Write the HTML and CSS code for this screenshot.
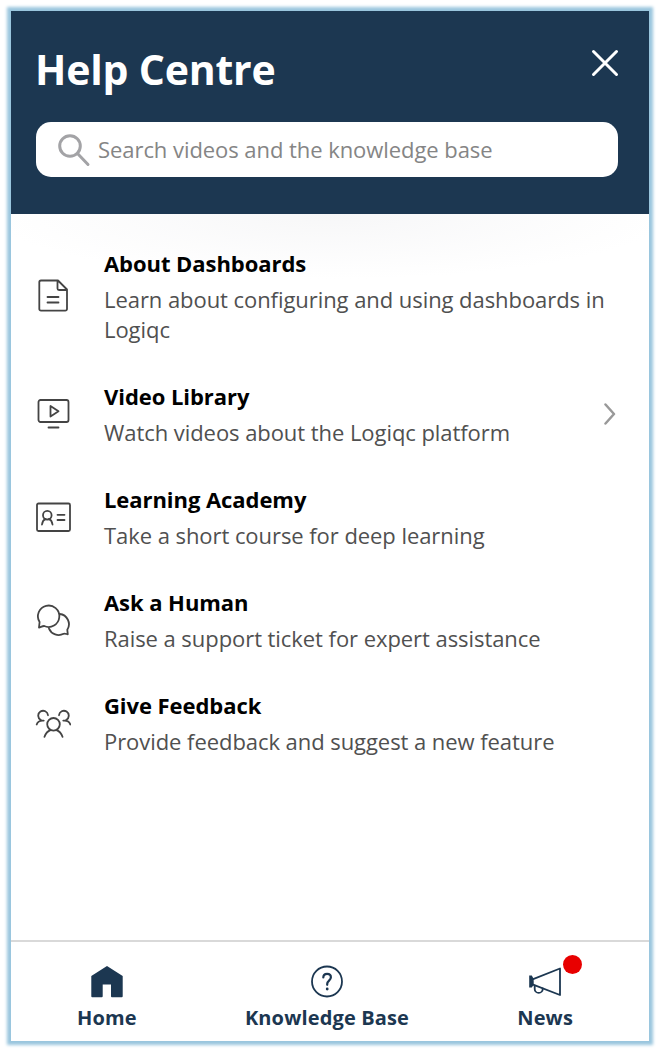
FILE: index.html
```html
<!DOCTYPE html>
<html lang="en">

<head>
    <meta charset="UTF-8">
    <meta name="viewport" content="width=device-width, initial-scale=1.0">
    <title>Help Centre</title>
    <link rel="stylesheet" href="styles.css">
</head>

<body>
    <div class="widget">
        <header class="header">
            <div class="header-top">
                <h1>Help Centre</h1>
                <button class="close" aria-label="Close">
                    <svg width="28" height="28" viewBox="0 0 28 28"><path d="M2.500 2.500l23 23M25.500 2.500l-23 23"/></svg>
                </button>
            </div>
            <div class="search">
                <svg width="34" height="34" viewBox="0 0 34 34"><circle cx="13" cy="13" r="10.3"/><path d="M20.500 20.500L31 31.500"/></svg>
                <input type="text" placeholder="Search videos and the knowledge base">
            </div>
        </header>

        <main class="menu">
            <a class="item">
                <svg class="icon" viewBox="0 0 36 36"><path d="M6 2.500h17L32 11.500v19.500a1.700 1.700 0 0 1-1.700 1.700H6A1.700 1.700 0 0 1 4.300 31V4.200A1.700 1.700 0 0 1 6 2.500zM22.500 2.500V10.500a1.500 1.500 0 0 0 1.500 1.500h8M12.500 19h11M12.500 24.500h11"/></svg>
                <div class="text">
                    <h2>About Dashboards</h2>
                    <p>Learn about configuring and using dashboards in Logiqc</p>
                </div>
            </a>
            <a class="item">
                <svg class="icon" viewBox="0 0 36 36"><rect x="3.500" y="4" width="30" height="22" rx="2"/><path d="M15.500 10v10.500l8-5.200zM13.500 31.500h10"/></svg>
                <div class="text">
                    <h2>Video Library</h2>
                    <p>Watch videos about the Logiqc platform</p>
                </div>
                <svg class="arrow" width="12" height="24" viewBox="0 0 12 24"><path d="M1.500 2.500l8.500 9.500-8.500 9.500"/></svg>
            </a>
            <a class="item">
                <svg class="icon" viewBox="0 0 36 36"><rect x="2" y="4.500" width="33" height="27.500" rx="1.500"/><circle cx="12.300" cy="16.200" r="4.300"/><path d="M7 25.500c.4-3 1.800-4.800 3.600-5.600M17.500 25.500c-.4-3-1.800-4.800-3.600-5.600M22.500 15.800H29.500M22.500 21H29.500"/></svg>
                <div class="text">
                    <h2>Learning Academy</h2>
                    <p>Take a short course for deep learning</p>
                </div>
            </a>
            <a class="item">
                <svg class="icon" viewBox="0 0 36 36"><path d="M4 25.500L4.600 20A10.700 10.700 0 1 1 9.200 24c-1.700-.1-3.700 1.200-5.200 1.500z"/><path d="M24.600 12A10.300 10.300 0 0 1 32.300 27.800L32.800 32.300c-1.500-.2-2.600-.9-4.200-.5A10.500 10.500 0 0 1 14 26.600"/></svg>
                <div class="text">
                    <h2>Ask a Human</h2>
                    <p>Raise a support ticket for expert assistance</p>
                </div>
            </a>
            <a class="item">
                <svg class="icon" viewBox="0 0 36 36"><circle cx="18.500" cy="19.300" r="6.300"/><path d="M9.500 31.800c1.200-3.500 3.200-5.600 6-6.600M27.500 31.800c-1.200-3.500-3.200-5.600-6-6.600M13 10.300A4.900 4.900 0 1 0 5.800 15M24 10.300A4.900 4.900 0 1 1 31.200 15M1.700 19.500c.8-2.500 2.900-4.300 7-3.900M35.300 19.500c-.8-2.500-2.900-4.300-7-3.900"/></svg>
                <div class="text">
                    <h2>Give Feedback</h2>
                    <p>Provide feedback and suggest a new feature</p>
                </div>
            </a>
        </main>

        <nav class="tabs">
            <a class="tab">
                <svg width="34" height="34" viewBox="0 0 34 34"><path class="solid" d="M17 1L1.300 11v20.300a.9.900 0 0 0 .9.900h9.600a.9.900 0 0 0 .9-.9V19.500h8.300v11.800a.9.900 0 0 0 .9.900h9.900a.9.900 0 0 0 .9-.9V11z"/></svg>
                <span>Home</span>
            </a>
            <a class="tab">
                <svg width="34" height="34" viewBox="0 0 34 34"><circle cx="17" cy="16.500" r="15"/><path class="question" d="M13.300 12.500c0-2.300 1.600-3.700 3.800-3.700s3.800 1.400 3.800 3.500c0 3.200-3.700 3.500-3.700 6.700v.8"/><circle class="solid" cx="17.200" cy="24" r="1.400"/></svg>
                <span>Knowledge Base</span>
            </a>
            <a class="tab">
                <svg width="34" height="34" viewBox="0 0 34 34"><path d="M4.500 14.300L32 3.500v26.500L4.500 19.300z"/><path class="solid" d="M1.200 10.500h2.600l1.700 3v6.500l-1.700 2.500H1.200z"/><path d="M6.700 20.700v3.200a4 4 0 0 0 8 0v-.5"/></svg>
                <i class="badge"></i>
                <span>News</span>
            </a>
        </nav>
    </div>
</body>

</html>
```

FILE: styles.css
```css
* {
    margin: 0;
    padding: 0;
    box-sizing: border-box;
    font-family: "Open Sans", sans-serif;
}

body {
    background-color: #fff;
    padding: 11px;
}

svg {
    flex-shrink: 0;
    fill: none;
    stroke-linecap: round;
    stroke-linejoin: round;
}

.widget {
    display: flex;
    flex-direction: column;
    width: 638px;
    height: 1030px;
    background-color: #fff;
    box-shadow: 0 0 3px 4px #9ac6de;
}

.header {
    height: 203px;
    padding: 31px 30px 0 25px;
    background-color: #1c3751;
}

.header-top {
    display: flex;
    justify-content: space-between;
    height: 80px;
}

h1 {
    margin-left: -1px;
    color: #fff;
    font-size: 41px;
    line-height: 54px;
    letter-spacing: -0.2px;
}

.close {
    width: 28px;
    height: 28px;
    margin-top: 7px;
    border: none;
    background: none;
    cursor: pointer;
}

.close svg {
    display: block;
    stroke: #fff;
    stroke-width: 3;
}

.search {
    display: flex;
    align-items: center;
    gap: 7px;
    height: 55px;
    margin-right: 1px;
    padding-left: 21px;
    background-color: #fff;
    border-radius: 15px;
}

.search svg {
    stroke: #a3a3a6;
    stroke-width: 3;
}

.search input {
    flex: 1;
    padding-bottom: 2px;
    border: none;
    outline: none;
    background: none;
    font-size: 22px;
    letter-spacing: -0.06px;
}

.search input::placeholder {
    color: #858585;
}

.menu {
    flex: 1;
    display: flex;
    flex-direction: column;
    gap: 37px;
    padding: 34px 33px 0 24px;
    background: radial-gradient(ellipse 340px 65px at 50% 0, #f7f7f8, #fff);
}

.item {
    display: flex;
    align-items: center;
    cursor: pointer;
}

.icon {
    width: 36px;
    height: 36px;
    margin-right: 33px;
    stroke: #444;
    stroke-width: 1.8;
}

.text {
    flex: 1;
}

h2 {
    margin-bottom: 6px;
    color: #000;
    font-size: 22px;
    line-height: 30px;
    letter-spacing: -0.06px;
}

.text p {
    color: #505050;
    font-size: 22px;
    line-height: 30px;
    letter-spacing: -0.06px;
}

.arrow {
    stroke: #999;
    stroke-width: 2.5;
}

.tabs {
    display: flex;
    justify-content: space-between;
    height: 101px;
    padding: 23px 76px 0 66px;
    border-top: 2px solid #d9d9d9;
}

.tab {
    position: relative;
    display: flex;
    flex-direction: column;
    align-items: center;
    gap: 5px;
    color: #1c3751;
    font-size: 20px;
    font-weight: bold;
    line-height: 28px;
    letter-spacing: 0.15px;
    cursor: pointer;
}

.tab svg {
    stroke: #1c3751;
    stroke-width: 1.8;
}

.tab .solid {
    fill: #1c3751;
    stroke: none;
}

.tab .question {
    stroke-width: 2.2;
}

/* unread marker over the news icon */
.badge {
    position: absolute;
    top: -10px;
    right: -9px;
    width: 19px;
    height: 19px;
    background-color: #e80000;
    border-radius: 50%;
}
```
